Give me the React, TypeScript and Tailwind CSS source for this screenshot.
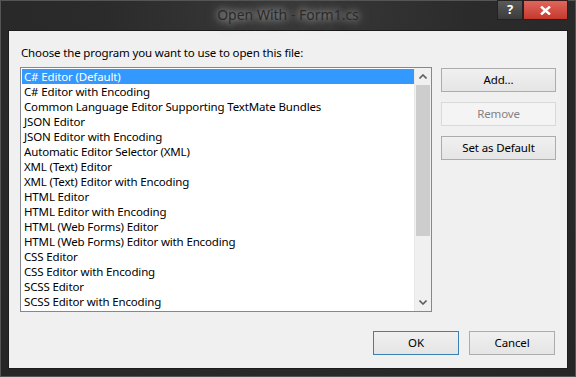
import { ReactNode } from 'react'

const programs = [
  'C# Editor (Default)',
  'C# Editor with Encoding',
  'Common Language Editor Supporting TextMate Bundles',
  'JSON Editor',
  'JSON Editor with Encoding',
  'Automatic Editor Selector (XML)',
  'XML (Text) Editor',
  'XML (Text) Editor with Encoding',
  'HTML Editor',
  'HTML Editor with Encoding',
  'HTML (Web Forms) Editor',
  'HTML (Web Forms) Editor with Encoding',
  'CSS Editor',
  'CSS Editor with Encoding',
  'SCSS Editor',
  'SCSS Editor with Encoding',
]

function Chevron({ up }: { up?: boolean }) {
  return (
    <svg width="8" height="5" viewBox="0 0 8 5" className="block">
      <path
        d={up ? 'M0.5 4.5 L4 1 L7.5 4.5' : 'M0.5 0.5 L4 4 L7.5 0.5'}
        fill="none"
        stroke="#606060"
        strokeWidth="1.6"
      />
    </svg>
  )
}

function Button({ children, disabled, isDefault, className = '' }: { children: ReactNode; disabled?: boolean; isDefault?: boolean; className?: string }) {
  let look = 'border-[#acacac] bg-gradient-to-b from-[#f0f0f0] to-[#e5e5e5] text-[#000]'
  if (disabled) look = 'border-[#d9d9d9] bg-[#f4f4f4] text-[#838383]'
  if (isDefault) look = 'border-[#3c7fb1] bg-gradient-to-b from-[#f0f0f0] to-[#e5e5e5] text-[#000]'
  return (
    <div className={`flex items-center justify-center border h-[24px] text-[11.5px] tracking-[-0.15px] ${look} ${className}`}>
      {children}
    </div>
  )
}

export default function App() {
  return (
    <div
      className="w-[576px] h-[377px] flex flex-col bg-[#2b2b2b] border border-[#555] bg-[radial-gradient(ellipse_at_50%_0%,#3a3a3a_0%,#2b2b2b_45%,#262626_100%)] font-['Segoe_UI','Noto_Sans',sans-serif]"
    >
      {/* Title bar */}
      <div className="relative h-[29px] flex items-center justify-center">
        <span className="text-[14px] text-[#2a2a2a] mt-[-2px] [text-shadow:0_0_6px_#9a9a9a,0_0_10px_#8a8a8a,0_0_14px_#7a7a7a]">
          Open With - Form1.cs
        </span>
        <div className="absolute right-[7px] top-[-1px] flex">
          <div className="w-[26px] h-[20px] flex items-center justify-center bg-gradient-to-b from-[#5a5a5a] to-[#3c3c3c] border border-[#222] text-white text-[13px] font-bold">
            ?
          </div>
          <div className="w-[45px] h-[20px] flex items-center justify-center bg-gradient-to-b from-[#e0665c] to-[#c4382d] border border-[#3a1a18]">
            <svg width="11" height="9" viewBox="0 0 11 9">
              <path d="M1 0.5 L10 8.5 M10 0.5 L1 8.5" stroke="#fff" strokeWidth="2.4" />
            </svg>
          </div>
        </div>
      </div>

      {/* Client area */}
      <div className="mx-[7px] mb-[7px] flex-1 border border-[#1c1c1c] bg-[#f0f0f0] flex flex-col px-[11px] pt-[14px] text-[11.5px] tracking-[-0.15px] text-black">
        <div className="h-[15px] leading-[15px] pl-[1px]">Choose the program you want to use to open this file:</div>

        <div className="flex mt-[7px]">
          <div className="w-[412px] h-[245px] border border-[#828790] bg-white flex overflow-hidden">
            <div className="flex-1 pt-[1px] pl-[1px]">
              {programs.map((name, i) => (
                <div
                  key={name}
                  className={`h-[15px] leading-[15px] pl-[2px] whitespace-nowrap ${i === 0 ? 'bg-[#3399ff] text-white' : ''}`}
                >
                  {name}
                </div>
              ))}
            </div>
            <div className="w-[17px] flex flex-col bg-[#f0f0f0] border-l border-[#e8e8e8]">
              <div className="h-[17px] flex items-center justify-center">
                <Chevron up />
              </div>
              <div className="h-[151px] mx-[1px] bg-[#cdcdcd]" />
              <div className="flex-1" />
              <div className="h-[17px] flex items-center justify-center">
                <Chevron />
              </div>
            </div>
          </div>

          <div className="ml-[9px] w-[115px] flex flex-col gap-[10px] pt-[1px]">
            <Button>Add...</Button>
            <Button disabled>Remove</Button>
            <Button>Set as Default</Button>
          </div>
        </div>

        <div className="flex justify-end gap-[10px] mt-[19px] pr-[1px]">
          <Button isDefault className="w-[86px] h-[24px]">OK</Button>
          <Button className="w-[86px] h-[24px]">Cancel</Button>
        </div>
      </div>
    </div>
  )
}
